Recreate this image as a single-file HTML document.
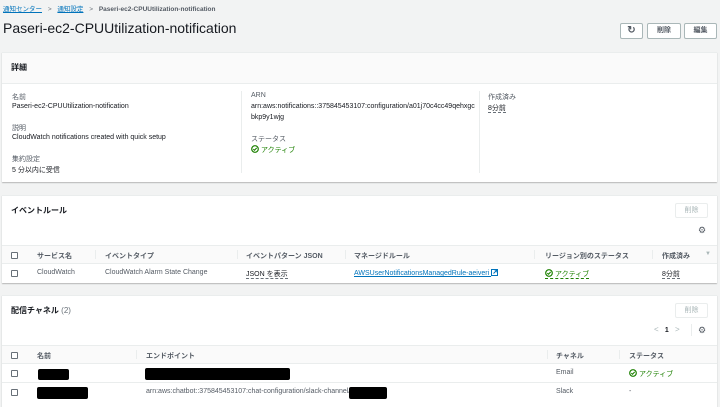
<!DOCTYPE html>
<html><head><meta charset="utf-8"><style>
*{margin:0;padding:0;box-sizing:border-box}
body{width:720px;height:403px;background:#f2f3f3;font-family:"Liberation Sans","Noto Sans CJK JP",sans-serif;color:#16191f;position:relative;overflow:hidden;font-size:7px}
.a{position:absolute;white-space:nowrap}
.card{position:absolute;left:2px;width:715px;background:#fff;box-shadow:0 1px 1px rgba(0,0,0,.25);border-top:1px solid #eaeded}
.hd{position:absolute;left:0;right:0;top:0;background:#fafafa;border-bottom:1px solid #eaeded}
.lbl{color:#545b64}
.link{color:#0073bb;text-decoration:underline}
.btn{position:absolute;border:1px solid #aab7b8;background:#fff;border-radius:2px;font-size:7px;font-weight:bold;color:#545b64;text-align:center}
.btn.dis{color:#aab7b8;border-color:#eaeded;font-weight:normal}
.cb{position:absolute;width:7px;height:7px;border:1px solid #687078;border-radius:1px;background:#fff}
.th{position:absolute;left:0;right:0;background:#fafafa;border-bottom:1px solid #eaeded;border-top:1px solid #eaeded}
.sep{position:absolute;width:1px;height:9px;background:#eaeded}
.row{position:absolute;left:0;right:0;border-bottom:1px solid #eaeded}
.g{color:#1d8102}
.blk{position:absolute;background:#000;border-radius:2px}
.dot{border-bottom:1px dashed #687078}
svg.ck{width:8px;height:8px;vertical-align:-1px;margin-right:2px}
</style></head><body>
<div class="a" style="left:3px;top:3px;font-size:6.5px"><span class="link">通知センター</span> <span style="color:#687078;margin:0 4px">&gt;</span> <span class="link">通知設定</span> <span style="color:#687078;margin:0 4px">&gt;</span> <span style="color:#545b64;font-weight:bold">Paseri-ec2-CPUUtilization-notification</span></div>
<div class="a" style="left:3px;top:20px;font-size:14px">Paseri-ec2-CPUUtilization-notification</div>
<div class="btn" style="left:620px;top:23px;width:23px;height:16px;font-size:10px;line-height:14px">&#x21bb;</div>
<div class="btn" style="left:647px;top:23px;width:34px;height:16px;line-height:14px">削除</div>
<div class="btn" style="left:684px;top:23px;width:33px;height:16px;line-height:14px">編集</div>

<div class="card" style="top:52px;height:130px">
 <div class="hd" style="height:31px"></div>
 <div class="a" style="left:9px;top:9px;font-size:8px;font-weight:bold">詳細</div>
 <div class="a lbl" style="left:10px;top:39px">名前</div>
 <div class="a" style="left:10px;top:50px">Paseri-ec2-CPUUtilization-notification</div>
 <div class="a lbl" style="left:10px;top:70px">説明</div>
 <div class="a" style="left:10px;top:81px">CloudWatch notifications created with quick setup</div>
 <div class="a lbl" style="left:10px;top:101px">集約設定</div>
 <div class="a" style="left:10px;top:112px">5 分以内に受信</div>
 <div style="position:absolute;left:239px;top:38px;width:1px;height:82px;background:#eaeded"></div>
 <div class="a lbl" style="left:249px;top:39px">ARN</div>
 <div class="a" style="left:249px;top:50px">arn:aws:notifications::375845453107:configuration/a01j70c4cc49qehxgc</div>
 <div class="a" style="left:249px;top:61px">bkp9y1wjg</div>
 <div class="a lbl" style="left:249px;top:81px">ステータス</div>
 <div class="a g" style="left:249px;top:92px"><svg class="ck" viewBox="0 0 8 8"><circle cx="4" cy="4" r="3.3" fill="none" stroke="#1d8102" stroke-width="1.2"/><path d="M2.3 4.1L3.5 5.2 5.7 2.9" fill="none" stroke="#1d8102" stroke-width="1.1"/></svg>アクティブ</div>
 <div style="position:absolute;left:477px;top:38px;width:1px;height:82px;background:#eaeded"></div>
 <div class="a lbl" style="left:486px;top:39px">作成済み</div>
 <div class="a" style="left:486px;top:50px"><span class="dot">8分前</span></div>
</div>

<div class="card" style="top:195px;height:88px">
 <div class="a" style="left:9px;top:9px;font-size:8px;font-weight:bold">イベントルール</div>
 <div class="btn dis" style="left:673px;top:7px;width:33px;height:15px;line-height:13px">削除</div>
 <div class="a" style="left:696px;top:29px;font-size:9px;color:#545b64">&#9881;</div>
 <div class="th" style="top:49px;height:19px"></div>
 <div class="cb" style="left:9px;top:56px"></div>
 <div class="a lbl" style="left:35px;top:55px;font-weight:bold">サービス名</div>
 <div class="sep" style="left:93px;top:54px"></div>
 <div class="a lbl" style="left:103px;top:55px;font-weight:bold">イベントタイプ</div>
 <div class="sep" style="left:235px;top:54px"></div>
 <div class="a lbl" style="left:244px;top:55px;font-weight:bold">イベントパターン JSON</div>
 <div class="sep" style="left:343px;top:54px"></div>
 <div class="a lbl" style="left:352px;top:55px;font-weight:bold">マネージドルール</div>
 <div class="sep" style="left:532px;top:54px"></div>
 <div class="a lbl" style="left:543px;top:55px;font-weight:bold">リージョン別のステータス</div>
 <div class="sep" style="left:650px;top:54px"></div>
 <div class="a lbl" style="left:660px;top:55px;font-weight:bold">作成済み</div>
 <div class="a" style="left:703px;top:55px;color:#aab7b8;font-size:6px">&#9660;</div>
 <div class="cb" style="left:9px;top:74px"></div>
 <div class="a lbl" style="left:35px;top:73px">CloudWatch</div>
 <div class="a lbl" style="left:103px;top:73px">CloudWatch Alarm State Change</div>
 <div class="a" style="left:244px;top:73px"><span class="dot">JSON を表示</span></div>
 <div class="a link" style="left:352px;top:73px">AWSUserNotificationsManagedRule-aeiveri <svg width="7" height="7" viewBox="0 0 7 7" style="vertical-align:-1px"><rect x="0.5" y="0.5" width="6" height="6" fill="none" stroke="#0073bb"/><path d="M2.5 4.5L6 1M3.5 1H6V3.5" fill="none" stroke="#0073bb"/></svg></div>
 <div class="a g" style="left:543px;top:73px"><span style="border-bottom:1px dashed #1d8102"><svg class="ck" viewBox="0 0 8 8"><circle cx="4" cy="4" r="3.3" fill="none" stroke="#1d8102" stroke-width="1.2"/><path d="M2.3 4.1L3.5 5.2 5.7 2.9" fill="none" stroke="#1d8102" stroke-width="1.1"/></svg>アクティブ</span></div>
 <div class="a" style="left:660px;top:73px"><span class="dot">8分前</span></div>
</div>

<div class="card" style="top:295px;height:112px">
 <div class="a" style="left:9px;top:9px;font-size:8px;font-weight:bold">配信チャネル <span style="font-weight:normal;color:#687078">(2)</span></div>
 <div class="btn dis" style="left:673px;top:7px;width:33px;height:15px;line-height:13px">削除</div>
 <div class="a" style="left:652px;top:29px;font-size:8px;color:#aab7b8">&lt; <b style="color:#16191f;font-size:7px;margin:0 4px">1</b> &gt;</div>
 <div style="position:absolute;left:689px;top:28px;width:1px;height:12px;background:#eaeded"></div>
 <div class="a" style="left:696px;top:29px;font-size:9px;color:#545b64">&#9881;</div>
 <div class="th" style="top:49px;height:19px"></div>
 <div class="cb" style="left:9px;top:56px"></div>
 <div class="a lbl" style="left:35px;top:55px;font-weight:bold">名前</div>
 <div class="sep" style="left:134px;top:54px"></div>
 <div class="a lbl" style="left:144px;top:55px;font-weight:bold">エンドポイント</div>
 <div class="sep" style="left:545px;top:54px"></div>
 <div class="a lbl" style="left:554px;top:55px;font-weight:bold">チャネル</div>
 <div class="sep" style="left:617px;top:54px"></div>
 <div class="a lbl" style="left:627px;top:55px;font-weight:bold">ステータス</div>
 <div class="row" style="top:68px;height:19px"></div>
 <div class="cb" style="left:9px;top:74px"></div>
 <div class="blk" style="left:36px;top:73px;width:31px;height:11px"></div>
 <div class="blk" style="left:143px;top:72px;width:145px;height:12px"></div>
 <div class="a lbl" style="left:554px;top:73px">Email</div>
 <div class="a g" style="left:627px;top:73px"><svg class="ck" viewBox="0 0 8 8"><circle cx="4" cy="4" r="3.3" fill="none" stroke="#1d8102" stroke-width="1.2"/><path d="M2.3 4.1L3.5 5.2 5.7 2.9" fill="none" stroke="#1d8102" stroke-width="1.1"/></svg>アクティブ</div>
 <div class="cb" style="left:9px;top:93px"></div>
 <div class="blk" style="left:35px;top:91px;width:51px;height:12px"></div>
 <div class="a" style="left:144px;top:92px;color:#545b64">arn:aws:chatbot::375845453107:chat-configuration/slack-channel/</div>
 <div class="blk" style="left:347px;top:91px;width:38px;height:12px"></div>
 <div class="a lbl" style="left:554px;top:92px">Slack</div>
 <div class="a lbl" style="left:627px;top:92px">-</div>
</div>
</body></html>
